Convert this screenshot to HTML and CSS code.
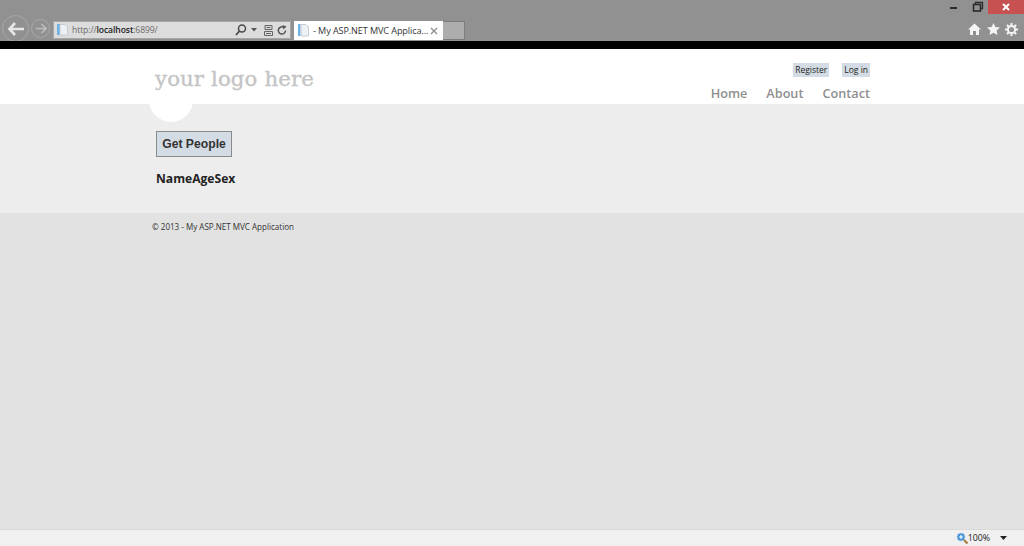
FILE: index.html
```html
<!DOCTYPE html>
<html lang="en">
<head>
<meta charset="utf-8">
<title>My ASP.NET MVC Application</title>
<link rel="stylesheet" href="styles.css">
</head>
<body>
<div class="window">
  <div class="chrome">
    <div class="caption">
      <svg class="cap-icon" width="12" height="12" viewBox="0 0 12 12"><rect x="1" y="5" width="7" height="2" fill="#2b2b2b"/></svg>
      <svg class="cap-icon restore" width="12" height="12" viewBox="0 0 12 12"><path d="M3.5 3V1.5h7v6H8.5" fill="none" stroke="#2b2b2b" stroke-width="1.3"/><rect x="1.5" y="3.5" width="7" height="6.5" fill="none" stroke="#2b2b2b" stroke-width="1.6"/></svg>
      <div class="close"><svg width="10" height="10" viewBox="0 0 10 10"><path d="M2 2l6 6M8 2l-6 6" stroke="#fff" stroke-width="2"/></svg></div>
    </div>
    <div class="toolbar">
      <div class="nav-buttons">
        <div class="back"><svg width="18" height="16" viewBox="0 0 18 16"><path d="M8 2L2.500 8 8 14M3 8h14" fill="none" stroke="#e6e6e6" stroke-width="2.600"/></svg></div>
        <div class="forward"><svg width="12" height="11" viewBox="0 0 12 11"><path d="M6.500 1l4.500 4.500L6.500 10M11 5.500H1" fill="none" stroke="#bdbdbd" stroke-width="1.600"/></svg></div>
      </div>
      <div class="address">
        <svg class="page-icon" width="11" height="12" viewBox="0 0 11 12"><rect x="0" y="0" width="3" height="11" fill="#6cb2e4"/><path d="M3 .5h5l2.500 2.500v8H3z" fill="#eef1f4" stroke="#c4ccd4"/></svg>
        <span class="url"><span class="url-dim">http://</span><b class="url-host">localhost</b><span class="url-dim">:6899/</span></span>
        <span class="addr-tools">
          <svg width="12" height="12" viewBox="0 0 12 12"><circle cx="7" cy="4.500" r="3.500" fill="none" stroke="#4a4a4a" stroke-width="1.500"/><path d="M4.500 7L1 11" stroke="#4a4a4a" stroke-width="1.800"/></svg>
          <svg class="caret" width="6" height="4" viewBox="0 0 6 4"><path d="M0 0h6L3 3.500z" fill="#555"/></svg>
          <svg class="compat" width="9" height="11" viewBox="0 0 9 11"><path d="M1 .5h7v4H1zM.5 6.500h8v4h-8z" fill="none" stroke="#666"/><path d="M2.500 2.500h4M2 8.500h5" stroke="#666"/></svg>
          <svg width="10" height="11" viewBox="0 0 10 11"><path d="M8.500 5.500A3.600 3.600 0 1 1 6.800 2.400" fill="none" stroke="#555" stroke-width="1.500"/><path d="M5.500 0l4 1.500L6.500 4.500z" fill="#555"/></svg>
        </span>
      </div>
      <div class="tab">
        <svg class="page-icon" width="11" height="13" viewBox="0 0 11 13"><rect x="0" y="0" width="2.500" height="12" fill="#6cb2e4"/><path d="M3 .5h5l2.500 2.500v9H3z" fill="#eef1f4" stroke="#c4ccd4"/></svg>
        <span class="tab-title">- My ASP.NET MVC Applica...</span>
        <svg class="tab-close" width="8" height="8" viewBox="0 0 8 8"><path d="M1 1l6 6M7 1L1 7" stroke="#8c8c8c" stroke-width="1.300"/></svg>
      </div>
      <div class="new-tab"></div>
      <div class="tools">
        <svg width="13" height="12" viewBox="0 0 13 12"><path d="M6.500 .5L0 6.500h2V12h3V8h3v4h3V6.500h2z" fill="#f4f4f4"/></svg>
        <svg width="13" height="12" viewBox="0 0 13 12"><path d="M6.500 0l1.900 4.100 4.600.5-3.400 3 .9 4.400-4-2.300-4 2.300.9-4.400L0 4.600l4.600-.5z" fill="#f4f4f4"/></svg>
        <svg width="13" height="13" viewBox="0 0 13 13"><circle cx="6.500" cy="6.500" r="3.600" fill="none" stroke="#f4f4f4" stroke-width="2"/><path d="M6.500 0v2.500M6.500 10.500V13M0 6.500h2.500M10.500 6.500H13M1.900 1.900l1.800 1.800M9.300 9.300l1.800 1.800M1.900 11.100l1.800-1.800M9.300 3.700l1.800-1.800" stroke="#f4f4f4" stroke-width="2"/></svg>
      </div>
    </div>
  </div>
  <div class="blackbar"></div>
  <header class="site-header">
    <div class="container header-inner">
      <div class="logo">your logo here</div>
      <div class="header-right">
        <div class="login-links"><a class="login-link">Register</a><a class="login-link">Log in</a></div>
        <nav class="menu"><a>Home</a><a>About</a><a>Contact</a></nav>
      </div>
    </div>
  </header>
  <main class="body-area">
    <div class="logo-circle"></div>
    <div class="container content">
      <button class="get-btn">Get People</button>
      <div class="columns"><span>Name</span><span>Age</span><span>Sex</span></div>
    </div>
  </main>
  <footer class="site-footer">
    <div class="container footer-text">© 2013 - My ASP.NET MVC Application</div>
  </footer>
  <div class="statusbar">
    <svg width="12" height="12" viewBox="0 0 12 12"><circle cx="5" cy="5" r="4" fill="#3d8fd8" stroke="#a9c6e2"/><path d="M3 5h4M5 3v4" stroke="#fff" stroke-width="1.200"/><path d="M8 8l3.500 3.500" stroke="#a5793a" stroke-width="2"/></svg>
    <span class="zoom-text">100%</span>
    <svg class="zoom-caret" width="7" height="4" viewBox="0 0 7 4"><path d="M0 0h7L3.500 4z" fill="#222"/></svg>
  </div>
</div>
</body>
</html>
```
FILE: styles.css
```css
* { box-sizing: border-box; }
html, body { margin: 0; height: 100%; overflow: hidden; }
body { font-family: "Open Sans", "Noto Sans", sans-serif; color: #222; }
.window { width: 1024px; height: 546px; display: flex; flex-direction: column; }

.chrome { height: 41px; background: #919191; position: relative; flex: none; overflow: hidden; }
.caption { position: absolute; top: 0; right: 0; display: flex; align-items: flex-start; }
.cap-icon { margin-top: 2px; margin-right: 11px; }
.cap-icon.restore { margin-right: 4px; margin-top: 1px; }
.close { width: 36px; height: 14px; background: #c75050; display: flex; align-items: center; justify-content: center; }

.toolbar { position: absolute; left: 0; right: 0; top: 14px; height: 27px; display: flex; align-items: flex-start; }
.nav-buttons { display: flex; align-items: center; width: 53px; flex: none; height: 27px; padding-left: 2px; margin-top: 1px; }
.back { width: 27px; height: 27px; border-radius: 50%; border: 1px solid #a8a8a8; display: flex; align-items: center; justify-content: center; flex: none; }
.forward { width: 19px; height: 19px; border-radius: 50%; border: 1px solid #a8a8a8; margin-left: 2px; display: flex; align-items: center; justify-content: center; flex: none; }
.address { width: 238px; height: 18px; margin-top: 7px; background: #dcdcdc; border: 1px solid #a6a6a6; display: flex; align-items: center; padding-left: 3px; font-size: 8.600px; flex: none; }
.page-icon { flex: none; }
.url { margin-left: 4px; letter-spacing: -0.1px; }
.url-dim { color: #6a6a6a; }
.url-host { color: #222; font-weight: 600; }
.addr-tools { margin-left: auto; display: flex; align-items: center; gap: 4px; padding-right: 3px; }
.compat { margin-left: 3px; }
.tab { width: 149px; height: 19px; margin-top: 7px; margin-left: 3px; background: #fff; display: flex; align-items: center; padding-left: 4px; flex: none; font-size: 9.100px; color: #333; }
.tab-title { margin-left: 4px; white-space: nowrap; letter-spacing: -0.1px; }
.tab-close { margin-left: 2px; }
.new-tab { width: 22px; height: 19px; margin-top: 7px; background: #adadad; border: 1px solid #7d7d7d; border-left: 0; flex: none; }
.tools { margin-left: auto; display: flex; gap: 5.500px; align-items: center; height: 12px; margin-top: 9px; padding-right: 6px; }

.blackbar { height: 8px; background: #000; flex: none; }
.container { width: 720px; margin: 0 auto; }

.site-header { height: 55px; background: #fff; flex: none; }
.header-inner { display: flex; justify-content: space-between; height: 100%; padding: 0 0 0 5px; margin-left: 150px; }
.logo { font-family: "DejaVu Serif", serif; font-size: 21.300px; color: #c4c4c4; margin-top: 15px; letter-spacing: 0.1px; line-height: 30px; -webkit-text-stroke: 0.35px #c4c4c4; }
.header-right { display: flex; flex-direction: column; align-items: flex-end; padding-top: 14px; }
.login-links { display: flex; gap: 13px; }
.login-link { background: #d3dce4; color: #222; font-size: 8.500px; height: 14px; line-height: 14px; padding: 0 2px; }
.menu { display: flex; gap: 19px; margin-top: 7px; font-size: 12.700px; font-weight: 600; color: #8f8f8f; line-height: 18px; }

.body-area { height: 109px; background: #ededed; position: relative; flex: none; overflow: hidden; }
.logo-circle { position: absolute; left: 149px; top: -26px; width: 44px; height: 44px; border-radius: 50%; background: #fff; }
.content { margin-left: 156px; padding-top: 27px; }
.get-btn { display: block; width: 76px; height: 26px; background: #d3dce4; border: 1px solid #8a8a8a; font-family: "Liberation Sans", sans-serif; font-size: 12.200px; font-weight: 700; color: #333; padding: 0; }
.columns { margin-top: 14px; display: flex; font-size: 12.100px; font-weight: 700; color: #222; line-height: 16px; }

.site-footer { flex: 1; background: #e2e2e2; }
.footer-text { margin-left: 152px; padding-top: 8px; font-size: 8.050px; line-height: 12px; color: #333; }

.statusbar { height: 17px; background: #f0f0f0; border-top: 1px solid #d9d9d9; flex: none; display: flex; align-items: center; justify-content: flex-end; padding-right: 17px; }
.zoom-text { font-size: 8.800px; margin-left: 0; color: #222; }
.zoom-caret { margin-left: 10px; }
```
